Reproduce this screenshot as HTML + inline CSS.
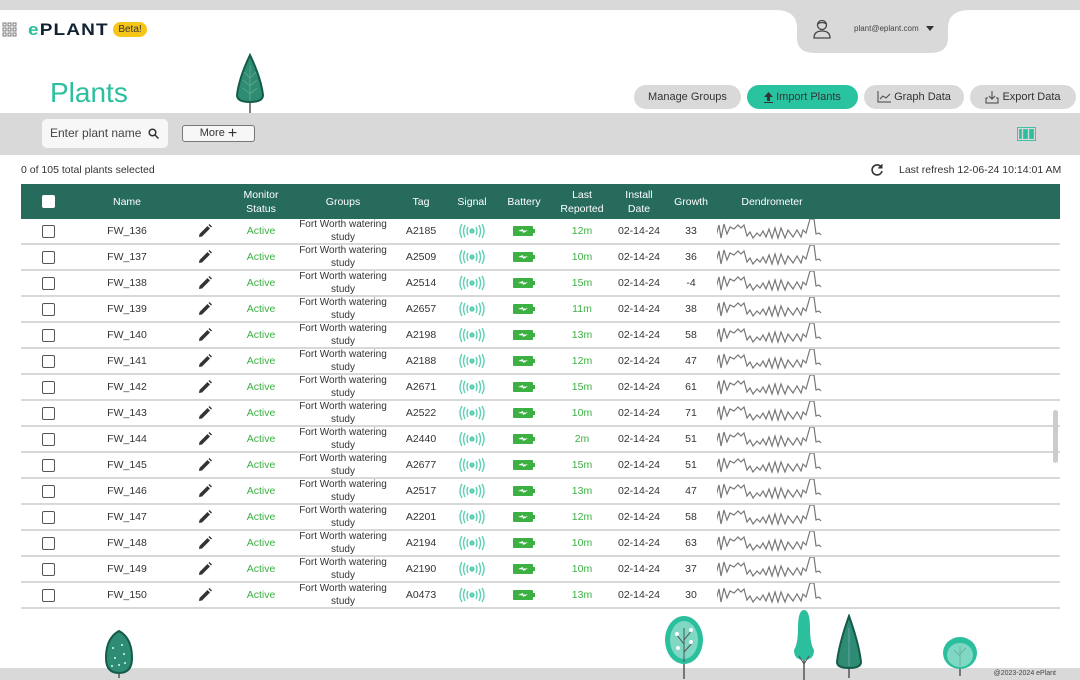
<!DOCTYPE html>
<html><head><meta charset="utf-8"><style>
*{box-sizing:border-box;margin:0;padding:0}
body{width:1080px;height:680px;overflow:hidden;background:#fff;font-family:"Liberation Sans",sans-serif;position:relative;color:#333}
.abs{position:absolute}
.btn{position:absolute;top:85px;height:24px;border-radius:12px;background:#d9d9d9;font-size:11px;color:#333;display:flex;align-items:center;justify-content:center;gap:3px}
table{position:absolute;left:21px;top:184px;width:1039px;border-collapse:collapse;font-size:10.5px;table-layout:fixed}
th{background:#276b5d;color:#fff;font-weight:normal;height:35px;line-height:14px;padding:0}
td{height:24px;border-bottom:2px solid #d8d8d8;text-align:center;padding:0;color:#333;overflow:hidden}
td>*{vertical-align:middle}
.cb{display:inline-block;width:13px;height:13px;border:1.5px solid #555;border-radius:2px;vertical-align:middle}
.g{color:#3cb043}
.grp{font-size:10px;line-height:13px;height:24px;overflow:visible;margin-top:-3px}
</style></head><body>
<div class="abs" style="left:0;top:0;width:1080px;height:10px;background:#d9d9d9"></div>
<svg class="abs" style="left:775px;top:10px" width="200" height="44"><path d="M0 0 Q22 0 22 18 L22 28 Q22 43 40 43 L155 43 Q173 43 173 28 L173 18 Q173 0 195 0 Z" fill="#d9d9d9"/></svg>
<svg class="abs" style="left:811px;top:18px" width="22" height="22" fill="none" stroke="#444" stroke-width="1.3"><circle cx="11" cy="7" r="4.5"/><path d="M6.5 6 Q11 3 15.5 6"/><path d="M3 20 Q3 13 11 13 Q19 13 19 20 Z"/></svg>
<div class="abs" style="left:854px;top:24px;font-size:8px;color:#444">plant@eplant.com</div>
<svg class="abs" style="left:926px;top:26px" width="8" height="5"><path d="M0 0 L8 0 L4 5Z" fill="#333"/></svg>
<svg class="abs" style="left:2px;top:22px" width="16" height="16" fill="none" stroke="#777" stroke-width="1"><g><rect x="1" y="1" width="3" height="3"/><rect x="6" y="1" width="3" height="3"/><rect x="11" y="1" width="3" height="3"/><rect x="1" y="6" width="3" height="3"/><rect x="6" y="6" width="3" height="3"/><rect x="11" y="6" width="3" height="3"/><rect x="1" y="11" width="3" height="3"/><rect x="6" y="11" width="3" height="3"/><rect x="11" y="11" width="3" height="3"/></g></svg>
<div class="abs" style="left:28px;top:20px;font-size:17px;font-weight:bold;letter-spacing:1px;color:#123;transform:scaleX(1.12);transform-origin:left"><span style="color:#2bbf9e">e</span>PLANT</div>
<div class="abs" style="left:113px;top:22px;width:34px;height:15px;border-radius:8px;background:#f5c518;font-size:10px;color:#333;text-align:center;line-height:15px">Beta!</div>
<div class="abs" style="left:50px;top:77px;font-size:28px;color:#2bbf9e">Plants</div>
<svg class="abs" style="left:234px;top:53px" width="32" height="63"><line x1="16" y1="30" x2="16" y2="62" stroke="#555" stroke-width="1.5"/><path d="M16 2 Q5 25 3 42 Q3 49 16 49 Q29 49 29 42 Q27 25 16 2Z" fill="#2e8b74" stroke="#145c4a" stroke-width="2"/><path d="M16 12 V48 M16 25 L10 19 M16 25 L22 19 M16 33 L9 27 M16 33 L23 27 M16 41 L9 35 M16 41 L23 35" stroke="#6a8" stroke-width="0.8"/></svg>
<div class="btn" style="left:634px;width:107px">Manage Groups</div>
<div class="btn" style="left:747px;width:111px;background:#2ac3a0"><svg width="9" height="11"><path d="M4.5 0 L9 5 H6 V9 H3 V5 H0Z M0 10 H9 V11 H0Z" fill="#333"/></svg>Import Plants</div>
<div class="btn" style="left:864px;width:100px"><svg width="14" height="12" fill="none" stroke="#444" stroke-width="1"><path d="M1 0 V11 H14 M3 8 L6 5 L9 7 L13 3"/></svg>Graph Data</div>
<div class="btn" style="left:970px;width:106px"><svg width="14" height="13" fill="none" stroke="#444" stroke-width="1"><path d="M7 0 V8 M4 5 L7 8 L10 5 M3 7 H1 V12 H13 V7 H11"/></svg>Export Data</div>
<div class="abs" style="left:0;top:113px;width:1080px;height:42px;background:#d9d9d9"></div>
<div class="abs" style="left:42px;top:119px;width:126px;height:29px;background:#f7f7f7;border-radius:5px;font-size:12px;color:#444;padding:7px 0 0 8px">Enter plant name</div>
<svg class="abs" style="left:148px;top:128px" width="11" height="11" fill="none" stroke="#333" stroke-width="1.5"><circle cx="4.5" cy="4.5" r="3.3"/><path d="M7 7 L10.5 10.5"/></svg>
<div class="abs" style="left:182px;top:125px;width:73px;height:17px;border:1px solid #777;border-radius:3px;background:#f7f7f7;font-size:11px;color:#333;text-align:center;line-height:15px">More <span style="font-size:16px;vertical-align:-2px">+</span></div>
<svg class="abs" style="left:1017px;top:127px" width="19" height="14"><rect x="0" y="0" width="19" height="14" fill="#2bbf9e"/><path d="M5.5 2 V12 M11.5 2 V12 M1.5 1.5 H17.5 V12.5 H1.5Z" stroke="#d9d9d9" stroke-width="1.3" fill="none"/></svg>
<div class="abs" style="left:21px;top:164px;font-size:10.5px;color:#333">0 of 105 total plants selected</div>
<svg class="abs" style="left:870px;top:163px" width="14" height="14" fill="none" stroke="#333" stroke-width="1.6"><path d="M11.5 4.5 A5 5 0 1 0 12 8"/><path d="M12 1 V5 H8" fill="#333" stroke-width="1"/></svg>
<div class="abs" style="left:899px;top:164px;font-size:10.5px;color:#333">Last refresh 12-06-24 10:14:01 AM</div>
<table>
<colgroup><col style="width:54px"><col style="width:104px"><col style="width:52px"><col style="width:60px"><col style="width:104px"><col style="width:52px"><col style="width:50px"><col style="width:54px"><col style="width:62px"><col style="width:52px"><col style="width:52px"><col style="width:110px"><col></colgroup>
<tr><th><span class="cb" style="background:#fff;border-color:#fff"></span></th><th>Name</th><th></th><th>Monitor<br>Status</th><th>Groups</th><th>Tag</th><th>Signal</th><th>Battery</th><th>Last<br>Reported</th><th>Install<br>Date</th><th>Growth</th><th>Dendrometer</th><th></th></tr>
<tbody id="tb"></tbody>
</table>
<script>
var d=[["136","A2185","12m","33"],["137","A2509","10m","36"],["138","A2514","15m","-4"],["139","A2657","11m","38"],["140","A2198","13m","58"],["141","A2188","12m","47"],["142","A2671","15m","61"],["143","A2522","10m","71"],["144","A2440","2m","51"],["145","A2677","15m","51"],["146","A2517","13m","47"],["147","A2201","12m","58"],["148","A2194","10m","63"],["149","A2190","10m","37"],["150","A0473","13m","30"]];
var pen='<svg width="14" height="14"><path d="M1 13 L1.5 10 L9.5 2 L12 4.5 L4 12.5Z M10.5 1 L11.5 0 L14 2.5 L13 3.5Z" fill="#333"/></svg>';
var sig='<svg width="28" height="16" fill="none" stroke="#5fd0b5" stroke-width="1.4"><circle cx="14" cy="8" r="2" fill="#5fd0b5"/><path d="M10 4 Q8 8 10 12 M18 4 Q20 8 18 12 M7 2 Q4 8 7 14 M21 2 Q24 8 21 14 M4 1 Q0 8 4 15 M24 1 Q28 8 24 15"/></svg>';
var bat='<svg width="22" height="10"><rect x="0" y="0" width="20" height="10" rx="1" fill="#3cb043"/><rect x="20" y="3" width="2" height="4" fill="#3cb043"/><path d="M5 5 L10 3 L10 4.5 L15 4.5 L10 7 L10 5.5Z" fill="#fff"/></svg>';
var den='<svg width="110" height="24" style="display:block;margin-left:-4px"><polyline fill="none" stroke="#777" stroke-width="1.2" points="0,13 3,17 6,6 8,19 11,5 14,15 17,8 21,10 25,6 28,9 31,6 34,17 37,13 40,19 44,14 47,17 50,12 53,18 56,10 59,19 62,9 65,19 68,9 72,19 75,11 80,18 84,11 88,18 90,11 93,14 97,0 101,0 103,15 106,14 108,16"/></svg>';
var h='';d.forEach(function(r){h+='<tr><td><span class="cb"></span></td><td>FW_'+r[0]+'</td><td>'+pen+'</td><td class="g">Active</td><td><div class="grp">Fort Worth watering<br>study</div></td><td>'+r[1]+'</td><td>'+sig+'</td><td>'+bat+'</td><td class="g">'+r[2]+'</td><td>02-14-24</td><td>'+r[3]+'</td><td>'+den+'</td><td></td></tr>'});
document.getElementById('tb').innerHTML=h;
</script>
<div class="abs" style="left:1053px;top:410px;width:5px;height:53px;background:#ccc;border-radius:3px"></div>
<div class="abs" style="left:0;top:668px;width:1080px;height:12px;background:#d9d9d9"></div>
<div class="abs" style="right:24px;top:670px;font-size:7px;color:#444">@2023-2024 ePlant</div>
<svg class="abs" style="left:100px;top:628px" width="40" height="50"><line x1="19" y1="30" x2="19" y2="50" stroke="#555" stroke-width="1.5"/><path d="M19 3 Q6 10 6 30 Q6 45 19 45 Q32 45 32 30 Q32 10 19 3Z" fill="#2e8b74" stroke="#145c4a" stroke-width="2"/><g fill="#cfe"><circle cx="13" cy="20" r="1"/><circle cx="22" cy="17" r="1"/><circle cx="15" cy="30" r="1"/><circle cx="24" cy="26" r="1"/><circle cx="19" cy="37" r="1"/><circle cx="12" cy="38" r="1"/><circle cx="25" cy="35" r="1"/></g></svg>
<svg class="abs" style="left:660px;top:614px" width="50" height="65"><line x1="24" y1="40" x2="24" y2="65" stroke="#555" stroke-width="1.5"/><ellipse cx="24" cy="26" rx="19" ry="24" fill="#2bbf9e"/><ellipse cx="24" cy="26" rx="14" ry="19" fill="#7fd8c3"/><path d="M24 48 V14 M24 30 L16 20 M24 26 L32 16 M24 38 L33 28" stroke="#555" stroke-width="1"/><g fill="#fff"><circle cx="17" cy="20" r="2"/><circle cx="31" cy="16" r="2"/><circle cx="31" cy="28" r="2"/><circle cx="18" cy="34" r="2"/></g></svg>
<svg class="abs" style="left:790px;top:608px" width="30" height="72"><line x1="14" y1="30" x2="14" y2="72" stroke="#555" stroke-width="1.5"/><path d="M14 2 Q8 2 8 20 Q8 36 4 42 Q4 52 14 52 Q24 52 24 42 Q20 36 20 20 Q20 2 14 2Z" fill="#2bbf9e"/><path d="M14 56 L9 48 M14 56 L19 48" stroke="#555"/></svg>
<svg class="abs" style="left:832px;top:614px" width="34" height="64"><line x1="17" y1="30" x2="17" y2="64" stroke="#555" stroke-width="1.5"/><path d="M17 2 Q7 30 5 48 Q5 54 17 54 Q29 54 29 48 Q27 30 17 2Z" fill="#2e8b74" stroke="#145c4a" stroke-width="2"/><path d="M17 14 V52" stroke="#7ab" stroke-width="0.8"/></svg>
<svg class="abs" style="left:940px;top:632px" width="40" height="44"><line x1="20" y1="20" x2="20" y2="44" stroke="#555" stroke-width="1.5"/><ellipse cx="20" cy="21" rx="17" ry="16" fill="#2bbf9e"/><ellipse cx="20" cy="23" rx="13" ry="12" fill="#7fd8c3"/><path d="M20 34 V14 M20 24 L14 18 M20 22 L26 16" stroke="#6a9" stroke-width="0.8"/></svg>
</body></html>
